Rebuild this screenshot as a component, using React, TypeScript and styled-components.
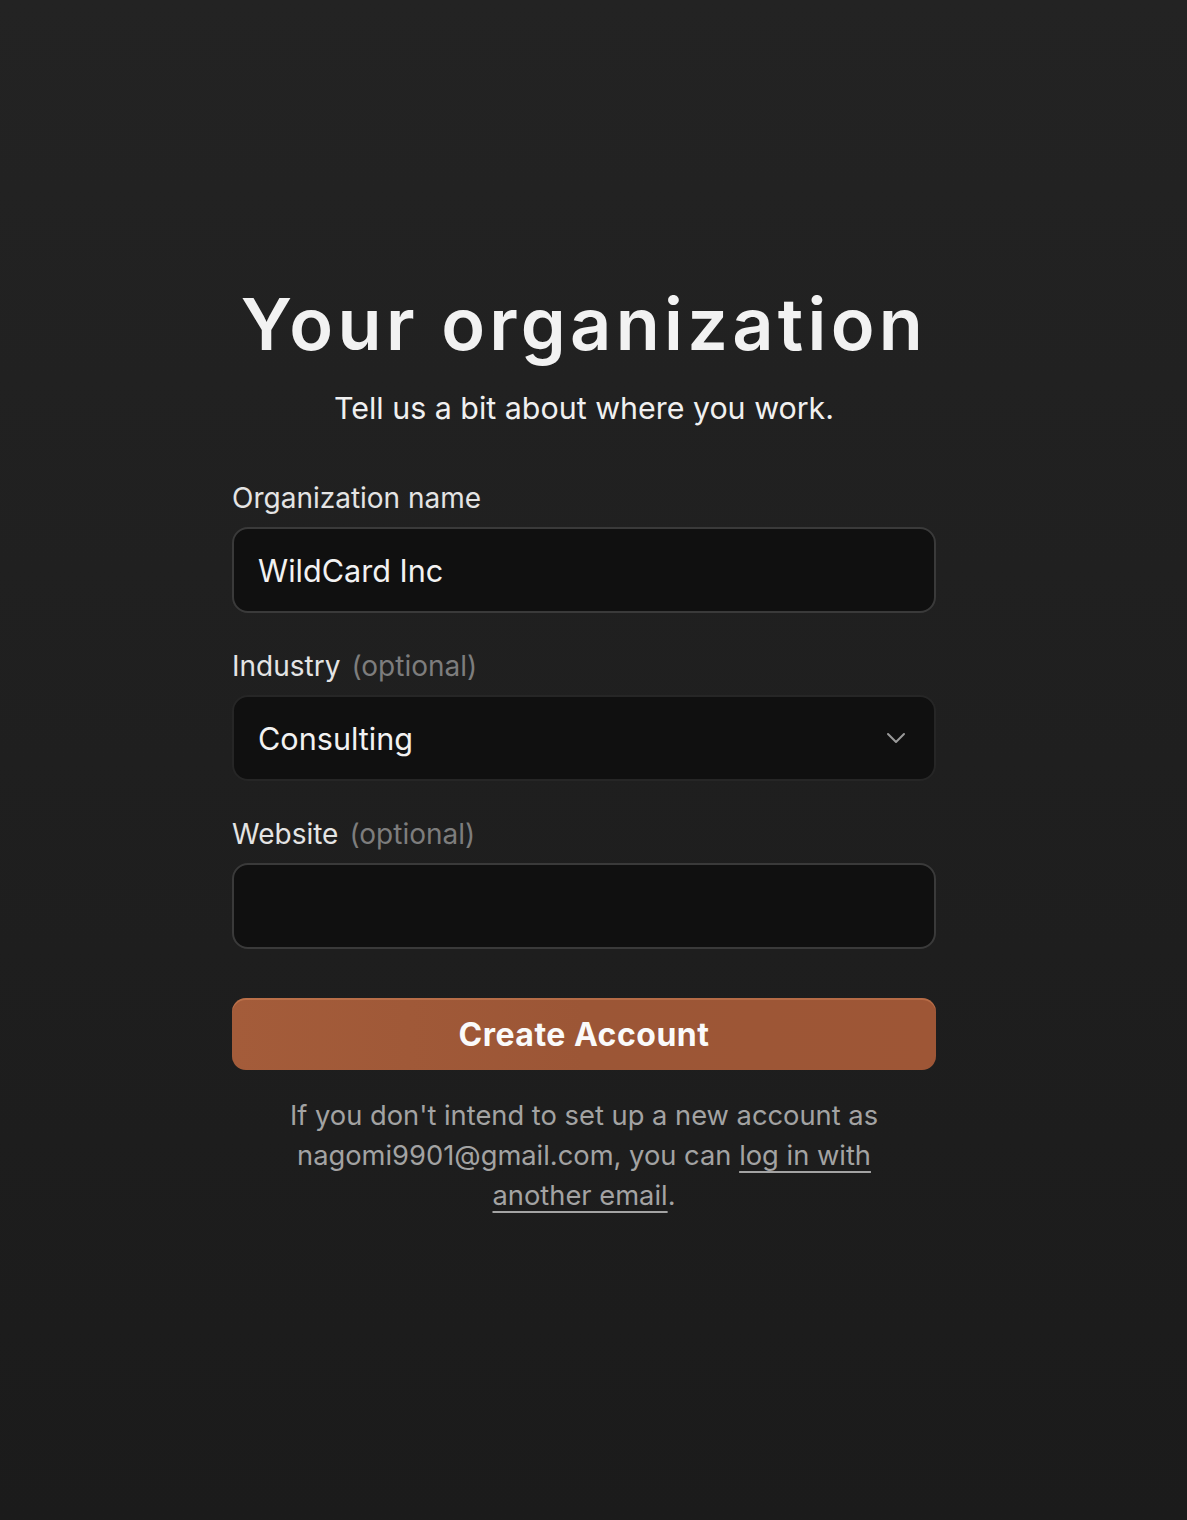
import React from "react";
import styled, { createGlobalStyle } from "styled-components";

const Global = createGlobalStyle`
  html, body { margin: 0; padding: 0; }
  body {
    background: linear-gradient(180deg, #232323 0%, #1b1b1b 100%);
    min-height: 1520px;
    font-family: Inter, "Liberation Sans", sans-serif;
    -webkit-font-smoothing: antialiased;
  }
`;

const Page = styled.main`
  min-height: 1520px;
  display: flex;
  justify-content: center;
  padding: 282px 19px 0 0;
  box-sizing: border-box;
`;

const Column = styled.div`
  width: 704px;
  display: flex;
  flex-direction: column;
`;

const Title = styled.h1`
  margin: 0;
  text-align: center;
  font-family: Inter, "Liberation Sans", sans-serif;
  font-weight: 600;
  font-size: 72px;
  line-height: 84px;
  letter-spacing: 4.3px;
  color: #f2f2f2;
`;

const Subtitle = styled.p`
  margin: 22px 0 0;
  text-align: center;
  font-size: 30.4px;
  line-height: 40px;
  color: #f0f0f0;
`;

const Form = styled.form`
  margin-top: 52px;
  display: flex;
  flex-direction: column;
`;

const Field = styled.div`
  display: flex;
  flex-direction: column;
  margin-bottom: 35px;
`;

const Label = styled.label`
  font-size: 28px;
  line-height: 36px;
  color: #e4e4e4;
  margin-bottom: 11px;
`;

const Optional = styled.span`
  color: #7d7d7d;
  margin-left: 11px;
`;

const Box = styled.div<{ $strong?: boolean }>`
  position: relative;
  height: 86px;
  box-sizing: border-box;
  background: #101010;
  border: 2px solid ${(p) => (p.$strong ? "#3a3a3a" : "#262626")};
  border-radius: 16px;
  display: flex;
  align-items: center;
  padding: 0 24px;
`;

const Value = styled.span`
  flex: 1;
  font-size: 30.6px;
  color: #f2f2f2;
`;

const Chevron = styled.svg`
  width: 20px;
  height: 12px;
  margin-right: 4px;
`;

const Button = styled.button`
  margin-top: 14px;
  height: 72px;
  border: none;
  border-radius: 14px;
  background: linear-gradient(90deg, #a45c3a 0%, #9c5636 50%, #9e5636 100%);
  box-shadow: inset 0 2px 0 rgba(255, 170, 120, 0.25);
  color: #fafafa;
  font-family: Inter, "Liberation Sans", sans-serif;
  font-weight: 700;
  font-size: 32px;
  letter-spacing: 0.5px;
`;

const Note = styled.p`
  margin: 26px auto 0;
  width: 610px;
  text-align: center;
  font-size: 27.3px;
  line-height: 40px;
  color: #a3a3a3;
`;

const Link = styled.a`
  color: #a3a3a3;
  text-decoration: underline;
  text-underline-offset: 6px;
  text-decoration-thickness: 2px;
`;

export default function App() {
  return (
    <>
      <Global />
      <Page>
        <Column>
          <Title>Your organization</Title>
          <Subtitle>Tell us a bit about where you work.</Subtitle>
          <Form>
            <Field>
              <Label>Organization name</Label>
              <Box $strong>
                <Value>WildCard Inc</Value>
              </Box>
            </Field>
            <Field>
              <Label>
                Industry<Optional>(optional)</Optional>
              </Label>
              <Box>
                <Value>Consulting</Value>
                <Chevron viewBox="0 0 20 12" fill="none">
                  <path d="M2 2 L10 10 L18 2" stroke="#9a9a9a" strokeWidth="2" strokeLinecap="round" strokeLinejoin="round" />
                </Chevron>
              </Box>
            </Field>
            <Field>
              <Label>
                Website<Optional>(optional)</Optional>
              </Label>
              <Box $strong />
            </Field>
            <Button type="button">Create Account</Button>
          </Form>
          <Note>
            If you don't intend to set up a new account as nagomi9901@gmail.com, you can{" "}
            <Link href="#">log in with another email</Link>.
          </Note>
        </Column>
      </Page>
    </>
  );
}
